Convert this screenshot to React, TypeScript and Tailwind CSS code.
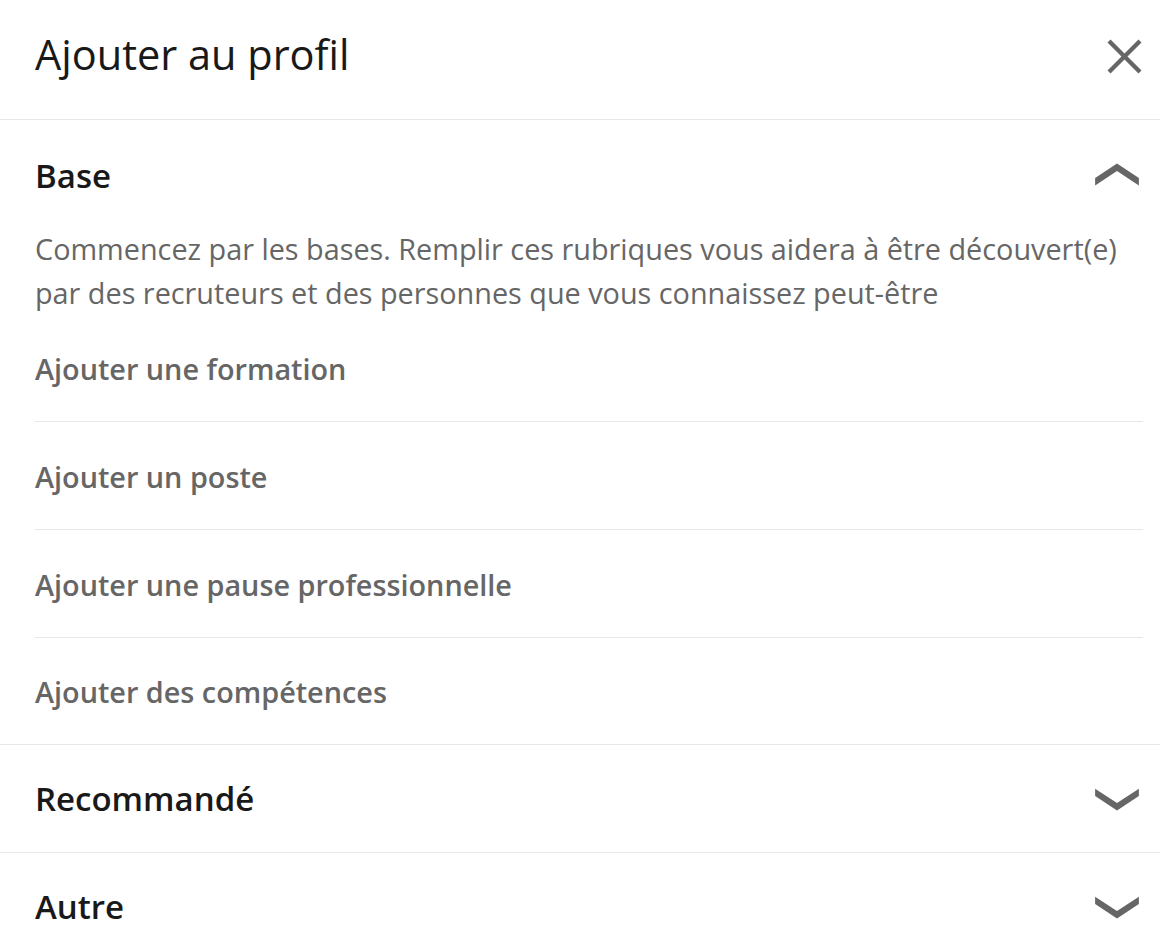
import React from "react";

function Chevron({ up }: { up?: boolean }) {
  return (
    <svg viewBox="0 0 16 16" width="50" height="50" fill="#666666" aria-hidden="true">
      {up ? (
        <path d="M15 11L8 6.39 1 11V8.61L8 4l7 4.61z" />
      ) : (
        <path d="M1 5l7 4.61L15 5v2.39L8 12 1 7.39z" />
      )}
    </svg>
  );
}

function CloseIcon() {
  return (
    <svg viewBox="0 0 24 24" width="51" height="51" fill="#666666" aria-hidden="true">
      <path d="M13.42 12L20 18.58 18.58 20 12 13.42 5.42 20 4 18.58 10.58 12 4 5.42 5.42 4 12 10.58 18.58 4 20 5.42z" />
    </svg>
  );
}

const items = [
  "Ajouter une formation",
  "Ajouter un poste",
  "Ajouter une pause professionnelle",
  "Ajouter des compétences",
];

export default function App() {
  return (
    <div className="w-[1160px] h-[940px] overflow-hidden bg-white [font-family:'Open_Sans',sans-serif]">
      <header className="h-[120px] flex items-center justify-between pl-[35px] pr-[10px] border-b border-[#e8e8e8]">
        <h1 className="mb-[11px] text-[41.5px] leading-[56px] font-normal text-[#191919]">Ajouter au profil</h1>
        <button className="mb-[7px] flex items-center justify-center">
          <CloseIcon />
        </button>
      </header>

      <section className="border-b border-[#e8e8e8]">
        <div className="h-[107px] flex items-center justify-between pl-[35px] pr-[18px]">
          <h2 className="mt-[4px] text-[33px] leading-[44px] font-semibold text-[#191919]">Base</h2>
          <div className="mt-[4px]">
            <Chevron up />
          </div>
        </div>
        <p className="pl-[35px] pr-[18px] text-[28.8px] leading-[43.5px] text-[#666666]">
          Commencez par les bases. Remplir ces rubriques vous aidera à être découvert(e) par des recruteurs et des personnes que vous connaissez peut-être
        </p>
        <ul className="pl-[35px] pr-[17px]">
          {items.map((t, i) => (
            <li
              key={t}
              className={
                i < items.length - 1
                  ? "h-[108px] pt-[2px] flex items-center border-b border-[#e8e8e8]"
                  : "h-[106px] pt-[2px] flex items-center"
              }
            >
              <span className="text-[28.8px] leading-[40px] font-semibold text-[#666666]">{t}</span>
            </li>
          ))}
        </ul>
      </section>

      <section className="border-b border-[#e8e8e8]">
        <div className="h-[107px] flex items-center justify-between pl-[35px] pr-[18px]">
          <h2 className="text-[33px] leading-[44px] font-semibold text-[#191919]">Recommandé</h2>
          <div className="mb-[2px]">
            <Chevron />
          </div>
        </div>
      </section>

      <section>
        <div className="h-[107px] flex items-center justify-between pl-[35px] pr-[18px]">
          <h2 className="text-[33px] leading-[44px] font-semibold text-[#191919]">Autre</h2>
          <div className="mb-[2px]">
            <Chevron />
          </div>
        </div>
      </section>
    </div>
  );
}
